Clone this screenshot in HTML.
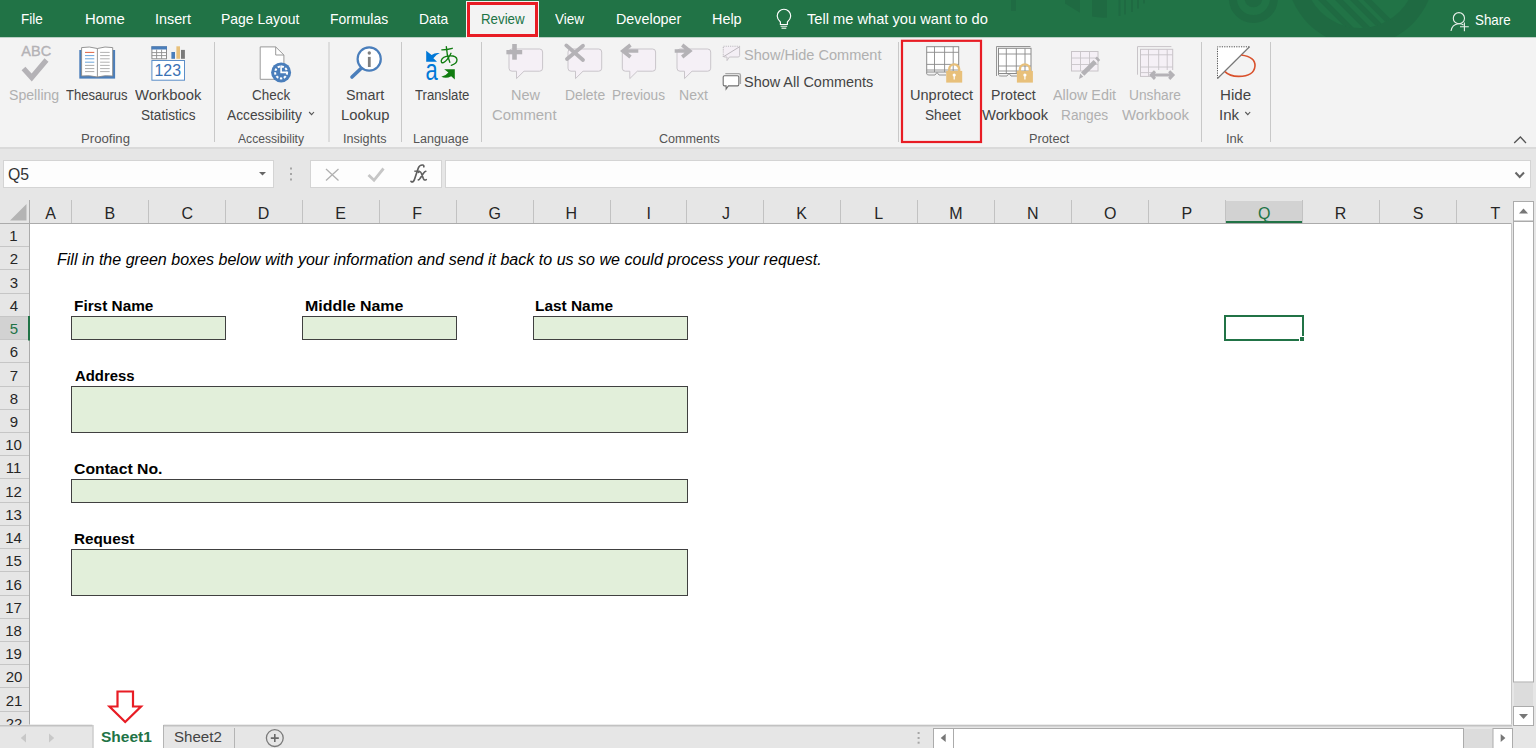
<!DOCTYPE html>
<html><head><meta charset="utf-8"><style>
html,body{margin:0;padding:0;width:1536px;height:748px;overflow:hidden;background:#e6e6e6;font-family:"Liberation Sans",sans-serif}
.t{position:absolute;white-space:pre;transform-origin:0 0}
svg{position:absolute;left:0;top:0}
</style></head><body>
<svg width="1536" height="748" viewBox="0 0 1536 748">
<rect x="0" y="0" width="1536" height="37.5" fill="#217346"/>
<g fill="#1f6a42" opacity="0.9">
<rect x="1011" y="0" width="5" height="11"/>
<path d="M1065 0 H1080 V12.7 L1065 3.5 Z"/>
<path d="M1092 0 H1107 V17.5 Q1100 18 1092 16.5 Z"/>
<rect x="1118.5" y="0" width="2" height="16"/>
<rect x="1124" y="0" width="2" height="14.4"/>
<rect x="1131" y="0" width="2" height="11.9"/>
<rect x="1137" y="0" width="2" height="8.5"/>
<rect x="1143" y="0" width="2" height="3.4"/>
</g>
<circle cx="1253.4" cy="-1.5" r="20.5" fill="none" stroke="#1f6a42" stroke-width="8"/>
<circle cx="1253.4" cy="-1.5" r="8.8" fill="#1f6a42"/>
<clipPath id="tb"><rect x="0" y="0" width="1536" height="37"/></clipPath>
<clipPath id="inner"><circle cx="1360" cy="-28" r="56"/></clipPath>
<g clip-path="url(#tb)"><circle cx="1360.5" cy="-28" r="73.5" fill="#1f6a42"/>
<circle cx="1360" cy="-28" r="56" fill="#217346"/>
<g clip-path="url(#inner)" stroke="#1f6a42" stroke-width="5.5">
<line x1="1302" y1="-20" x2="1362" y2="40"/>
<line x1="1319" y1="-20" x2="1379" y2="40"/>
<line x1="1334" y1="-20" x2="1394" y2="40"/>
<line x1="1347.5" y1="-20" x2="1407.5" y2="40"/>
</g></g>
<rect x="466" y="1" width="73" height="37" fill="#f3f3f3"/>
<rect x="0" y="37.5" width="1536" height="109.5" fill="#f3f3f3"/>
<rect x="466" y="36" width="73" height="3" fill="#f3f3f3"/>
<rect x="0" y="147" width="1536" height="2" fill="#dadada"/>
<rect x="468.5" y="3.5" width="68" height="32" fill="none" stroke="#e81c24" stroke-width="3"/>
<rect x="214.0" y="42" width="1" height="100" fill="#c8c8c8"/>
<rect x="328.5" y="42" width="1" height="100" fill="#c8c8c8"/>
<rect x="401.0" y="42" width="1" height="100" fill="#c8c8c8"/>
<rect x="481.0" y="42" width="1" height="100" fill="#c8c8c8"/>
<rect x="898.0" y="42" width="1" height="100" fill="#c8c8c8"/>
<rect x="1201.0" y="42" width="1" height="100" fill="#c8c8c8"/>
<rect x="1270.0" y="42" width="1" height="100" fill="#c8c8c8"/>
<rect x="902" y="40.8" width="79" height="101.2" fill="none" stroke="#e81c24" stroke-width="2.2"/>
<polyline points="309.1,112 311.6,114.6 314,112" fill="none" stroke="#555" stroke-width="1.1"/>
<polyline points="1245.3,112 1247.8,114.6 1250.2,112" fill="none" stroke="#555" stroke-width="1.1"/>
<polyline points="1514.2,143 1520.4,137 1526,143" fill="none" stroke="#555" stroke-width="1.3"/>
<rect x="3.5" y="160.5" width="270" height="27" fill="#fdfdfd" stroke="#d4d4d4"/>
<path d="M259 172 H266 L262.5 175.5 Z" fill="#666"/>
<rect x="290" y="167.5" width="2" height="2" fill="#a6a6a6"/>
<rect x="290" y="173" width="2" height="2" fill="#a6a6a6"/>
<rect x="290" y="178.5" width="2" height="2" fill="#a6a6a6"/>
<rect x="310.5" y="160.5" width="131" height="27" fill="#fdfdfd" stroke="#d4d4d4"/>
<path d="M326 169 L338.5 180.5 M338.5 169 L326 180.5" stroke="#b0b0b0" stroke-width="1.3"/>
<path d="M368.5 175 L374 180.3 L383.5 168.5" fill="none" stroke="#c6c6c6" stroke-width="2.8"/>
<path d="M411 181.3 Q412.8 183 414.2 180.2 L418.3 168 Q419.6 164.8 422.6 165 Q424.2 165.3 423.8 166.8" fill="none" stroke="#5f5f5f" stroke-width="1.7" stroke-linecap="round"/>
<path d="M414.3 171.2 H419.8" stroke="#5f5f5f" stroke-width="1.4"/>
<path d="M418.3 172.3 Q420.3 170.8 421.3 173.2 L423.4 178.6 Q424.4 180.8 426.3 179.6 M425.8 171.3 Q424.6 171.6 423.5 173.2 L420.2 178.2 Q419.2 180.2 418.3 179.8" fill="none" stroke="#5f5f5f" stroke-width="1.6" stroke-linecap="round"/>
<rect x="445.5" y="160.5" width="1085" height="27" fill="#fdfdfd" stroke="#d4d4d4"/>
<polyline points="1515.5,172.5 1519.7,177 1524,172.5" fill="none" stroke="#666" stroke-width="2"/>
<rect x="0" y="200" width="1512" height="24" fill="#e6e6e6"/>
<path d="M26.5 204 V220.5 H10 Z" fill="#b4b4b4"/>
<rect x="1225" y="201" width="77" height="22" fill="#d2d2d2"/>
<rect x="1225" y="221" width="77" height="2" fill="#217346"/>
<rect x="71" y="200" width="1" height="23" fill="#c2c2c2"/>
<rect x="148" y="200" width="1" height="23" fill="#c2c2c2"/>
<rect x="225" y="200" width="1" height="23" fill="#c2c2c2"/>
<rect x="302" y="200" width="1" height="23" fill="#c2c2c2"/>
<rect x="379" y="200" width="1" height="23" fill="#c2c2c2"/>
<rect x="456" y="200" width="1" height="23" fill="#c2c2c2"/>
<rect x="533" y="200" width="1" height="23" fill="#c2c2c2"/>
<rect x="610" y="200" width="1" height="23" fill="#c2c2c2"/>
<rect x="686" y="200" width="1" height="23" fill="#c2c2c2"/>
<rect x="763" y="200" width="1" height="23" fill="#c2c2c2"/>
<rect x="840" y="200" width="1" height="23" fill="#c2c2c2"/>
<rect x="917" y="200" width="1" height="23" fill="#c2c2c2"/>
<rect x="994" y="200" width="1" height="23" fill="#c2c2c2"/>
<rect x="1071" y="200" width="1" height="23" fill="#c2c2c2"/>
<rect x="1148" y="200" width="1" height="23" fill="#c2c2c2"/>
<rect x="1225" y="200" width="1" height="23" fill="#c2c2c2"/>
<rect x="1302" y="200" width="1" height="23" fill="#c2c2c2"/>
<rect x="1379" y="200" width="1" height="23" fill="#c2c2c2"/>
<rect x="1456" y="200" width="1" height="23" fill="#c2c2c2"/>
<rect x="0" y="223" width="1512" height="1" fill="#ababab"/>
<rect x="0" y="224" width="30" height="501" fill="#e6e6e6"/>
<rect x="0" y="316" width="29" height="24" fill="#d2d2d2"/>
<rect x="0" y="246" width="29" height="1" fill="#c6c6c6"/>
<rect x="0" y="269" width="29" height="1" fill="#c6c6c6"/>
<rect x="0" y="293" width="29" height="1" fill="#c6c6c6"/>
<rect x="0" y="316" width="29" height="1" fill="#c6c6c6"/>
<rect x="0" y="339" width="29" height="1" fill="#c6c6c6"/>
<rect x="0" y="362" width="29" height="1" fill="#c6c6c6"/>
<rect x="0" y="386" width="29" height="1" fill="#c6c6c6"/>
<rect x="0" y="409" width="29" height="1" fill="#c6c6c6"/>
<rect x="0" y="432" width="29" height="1" fill="#c6c6c6"/>
<rect x="0" y="455" width="29" height="1" fill="#c6c6c6"/>
<rect x="0" y="478" width="29" height="1" fill="#c6c6c6"/>
<rect x="0" y="502" width="29" height="1" fill="#c6c6c6"/>
<rect x="0" y="525" width="29" height="1" fill="#c6c6c6"/>
<rect x="0" y="548" width="29" height="1" fill="#c6c6c6"/>
<rect x="0" y="571" width="29" height="1" fill="#c6c6c6"/>
<rect x="0" y="595" width="29" height="1" fill="#c6c6c6"/>
<rect x="0" y="618" width="29" height="1" fill="#c6c6c6"/>
<rect x="0" y="641" width="29" height="1" fill="#c6c6c6"/>
<rect x="0" y="664" width="29" height="1" fill="#c6c6c6"/>
<rect x="0" y="687" width="29" height="1" fill="#c6c6c6"/>
<rect x="0" y="711" width="29" height="1" fill="#c6c6c6"/>
<rect x="29" y="200" width="1" height="525" fill="#ababab"/>
<rect x="28" y="316" width="2" height="24.5" fill="#217346"/>
<rect x="30" y="224" width="1481" height="500.5" fill="#ffffff"/>
<rect x="1511" y="223" width="1" height="502" fill="#c6c6c6"/>
<rect x="71.5" y="316.5" width="154" height="23" fill="#e2efda" stroke="#404040" stroke-width="1"/>
<rect x="302.5" y="316.5" width="154" height="23" fill="#e2efda" stroke="#404040" stroke-width="1"/>
<rect x="533.5" y="316.5" width="154" height="23" fill="#e2efda" stroke="#404040" stroke-width="1"/>
<rect x="71.5" y="386.5" width="616" height="46" fill="#e2efda" stroke="#404040" stroke-width="1"/>
<rect x="71.5" y="479.5" width="616" height="23" fill="#e2efda" stroke="#404040" stroke-width="1"/>
<rect x="71.5" y="549.5" width="616" height="46" fill="#e2efda" stroke="#404040" stroke-width="1"/>
<rect x="1225" y="316" width="78" height="24" fill="none" stroke="#217346" stroke-width="2"/>
<rect x="1299.5" y="336.5" width="5" height="5" fill="#217346" stroke="#fff" stroke-width="1"/>
<rect x="0" y="724.5" width="1536" height="23.5" fill="#e6e6e6"/>
<rect x="1512" y="200" width="24" height="548" fill="#e6e6e6"/>
<rect x="1513.5" y="201.5" width="20" height="19.5" fill="#fff" stroke="#ababab"/>
<path d="M1519 213.5 H1528 L1523.5 208.5 Z" fill="#777"/>
<rect x="1513.5" y="221.5" width="20" height="460.5" fill="#fff" stroke="#ababab"/>
<rect x="1514" y="683" width="19" height="23" fill="#dcdcdc"/>
<rect x="1513.5" y="706.5" width="20" height="19" fill="#fff" stroke="#ababab"/>
<path d="M1519 714 H1528 L1523.5 719 Z" fill="#777"/>
<rect x="0" y="725" width="1512" height="1.5" fill="#c2c2c2"/>
<rect x="92.5" y="724" width="71" height="24" fill="#ffffff"/>
<rect x="92.5" y="725" width="1" height="23" fill="#b4b4b4"/>
<rect x="163" y="725" width="1" height="23" fill="#b4b4b4"/>
<rect x="234" y="728" width="1" height="20" fill="#b4b4b4"/>
<path d="M26 733.4 V742.4 L20.8 737.9 Z" fill="#c8c8c8"/>
<path d="M49 733.4 V742.4 L54.2 737.9 Z" fill="#c8c8c8"/>
<circle cx="274.8" cy="738.1" r="8.4" fill="none" stroke="#7a7a7a" stroke-width="1.3"/>
<path d="M270.8 738.1 H278.8 M274.8 734.1 V742.1" stroke="#6a6a6a" stroke-width="1.6"/>
<rect x="917.6" y="732" width="2" height="2" fill="#a6a6a6"/>
<rect x="917.6" y="737" width="2" height="2" fill="#a6a6a6"/>
<rect x="917.6" y="741.7" width="2" height="2" fill="#a6a6a6"/>
<rect x="933.5" y="728.5" width="20" height="20" fill="#fff" stroke="#ababab"/>
<path d="M945.7 733.8 V742 L940.7 737.9 Z" fill="#777"/>
<rect x="953.5" y="728.5" width="510" height="20" fill="#fff" stroke="#ababab"/>
<rect x="1464" y="729" width="29" height="19" fill="#dcdcdc"/>
<rect x="1493" y="728.5" width="19.5" height="20" fill="#fff" stroke="#ababab"/>
<path d="M1500.7 734 V742 L1505.4 738 Z" fill="#777"/>
<path d="M117.5 691.5 H133 V706.5 H141 L125.2 722 L109.5 706.5 H117.5 Z" fill="none" stroke="#e81c24" stroke-width="2.2" stroke-linejoin="miter"/>
<text x="21.3" y="56" font-family="Liberation Sans" font-size="15.3" fill="#b4b2b6" stroke="#b4b2b6" stroke-width="0.35" textLength="29.8" lengthAdjust="spacingAndGlyphs">ABC</text>
<polyline points="23.5,68.5 31.7,77.5 46.5,60" fill="none" stroke="#b4b2b6" stroke-width="5.2"/>
<rect x="79.3" y="50" width="35.8" height="28.6" fill="#4a7ebb"/>
<path d="M81.6 47.6 Q89 46 97.4 48.5 Q105 46 112.7 47.6 V76 Q105 75 97.4 77 Q89 75 81.6 76 Z" fill="#fff" stroke="#8a8a8a" stroke-width="0.9"/>
<line x1="97.4" y1="48.5" x2="97.4" y2="77" stroke="#8a8a8a" stroke-width="0.9"/>
<line x1="85" y1="52.4" x2="94.3" y2="52.4" stroke="#d9512c" stroke-width="0.9"/>
<line x1="100.1" y1="52.4" x2="109.7" y2="52.4" stroke="#a8a8a8" stroke-width="0.9"/>
<line x1="85" y1="55.6" x2="94.3" y2="55.6" stroke="#5b9bd5" stroke-width="0.9"/>
<line x1="100.1" y1="55.6" x2="109.7" y2="55.6" stroke="#a8a8a8" stroke-width="0.9"/>
<line x1="85" y1="58.8" x2="94.3" y2="58.8" stroke="#5b9bd5" stroke-width="0.9"/>
<line x1="100.1" y1="58.8" x2="109.7" y2="58.8" stroke="#a8a8a8" stroke-width="0.9"/>
<line x1="85" y1="62.2" x2="94.3" y2="62.2" stroke="#5b9bd5" stroke-width="0.9"/>
<line x1="100.1" y1="62.2" x2="109.7" y2="62.2" stroke="#a8a8a8" stroke-width="0.9"/>
<line x1="85" y1="65.4" x2="94.3" y2="65.4" stroke="#a0a0a0" stroke-width="0.9"/>
<line x1="100.1" y1="65.4" x2="109.7" y2="65.4" stroke="#a8a8a8" stroke-width="0.9"/>
<line x1="85" y1="68.6" x2="94.3" y2="68.6" stroke="#a0a0a0" stroke-width="0.9"/>
<line x1="100.1" y1="68.6" x2="109.7" y2="68.6" stroke="#a8a8a8" stroke-width="0.9"/>
<line x1="85" y1="71.6" x2="94.3" y2="71.6" stroke="#a0a0a0" stroke-width="0.9"/>
<line x1="100.1" y1="71.6" x2="109.7" y2="71.6" stroke="#a8a8a8" stroke-width="0.9"/>
<rect x="151.9" y="46.8" width="14.6" height="12" fill="#fff" stroke="#8c8c8c" stroke-width="1"/>
<rect x="151.4" y="46.3" width="15.6" height="3.2" fill="#4a7ebb"/>
<line x1="156.6" y1="49.5" x2="156.6" y2="58.8" stroke="#8c8c8c" stroke-width="0.9"/>
<line x1="161.6" y1="49.5" x2="161.6" y2="58.8" stroke="#8c8c8c" stroke-width="0.9"/>
<line x1="151.9" y1="52.6" x2="166.5" y2="52.6" stroke="#8c8c8c" stroke-width="0.9"/>
<line x1="151.9" y1="55.6" x2="166.5" y2="55.6" stroke="#8c8c8c" stroke-width="0.9"/>
<rect x="171.4" y="52" width="3.6" height="6.8" fill="#4a7ebb"/>
<rect x="176.4" y="46.3" width="3.6" height="12.5" fill="#e8c07a"/>
<rect x="181" y="49.9" width="3.9" height="8.9" fill="#7a7a7a"/>
<rect x="151.9" y="60.5" width="32.6" height="19.7" fill="#fff" stroke="#5b8ec8" stroke-width="1"/>
<text x="154.5" y="76" font-family="Liberation Sans" font-size="16.5" fill="#3a72b5" textLength="26.5" lengthAdjust="spacingAndGlyphs">123</text>
<path d="M260.2 46.9 H275.7 L283.9 55 V79.3 H260.2 Z" fill="#fff" stroke="#9a9a9a" stroke-width="1"/>
<path d="M275.7 46.9 V55 H283.9" fill="none" stroke="#9a9a9a" stroke-width="1"/>
<circle cx="281.1" cy="72.4" r="10" fill="#4a7ebb"/>
<circle cx="281.1" cy="72.4" r="6" fill="none" stroke="#fff" stroke-width="2" stroke-dasharray="2.4 1.6"/>
<path d="M281.1 65.5 V72.4 H287" fill="none" stroke="#fff" stroke-width="1.6"/>
<circle cx="369.2" cy="59" r="11.6" fill="#fff" stroke="#4a7ebb" stroke-width="2.2"/>
<line x1="352" y1="77" x2="361" y2="68.5" stroke="#4a7ebb" stroke-width="3.6" stroke-linecap="round"/>
<circle cx="369.3" cy="53" r="1.7" fill="#7f7f7f"/>
<rect x="367.9" y="56.9" width="2.8" height="10.1" fill="#7f7f7f"/>
<path d="M426.2 50.7 L431.6 54.9 Q435.2 52.2 439.8 53.1 Q435.3 55.2 433.4 58.2 L437 61.7 H426.2 Z" fill="#0078d7"/>
<text x="425.4" y="79.7" font-family="Liberation Sans" font-size="29" fill="#0078d7" textLength="12.2" lengthAdjust="spacingAndGlyphs">a</text>
<g fill="none" stroke="#107c10" stroke-width="1.35" stroke-linecap="round"><path d="M441.8 49.8 Q447 49.8 452.3 48.3"/><path d="M446.3 46.6 Q446.6 55 449.8 62.3"/><path d="M451 53.3 Q447.5 60.5 443.5 62.6 Q441 63.3 441.3 60.5 Q442.5 56.3 449.5 55.8 Q456.6 55.6 457 59.8 Q457 63.6 451.3 65.4"/></g>
<path d="M454.8 69.3 V79.6 L451.2 76.2 Q446.2 79.2 441.3 76.8 Q446.3 75.2 448.4 72.4 L444.2 69.3 Z" fill="#107c10"/>
<path d="M512 49 H539.6 Q542.6 49 542.6 52 V68.2 Q542.6 71.2 539.6 71.2 H524 L516.5 78.6 V71.2 H512 Q509 71.2 509 68.2 V52 Q509 49 512 49 Z" fill="#f5f0f6" stroke="#c9c5ca" stroke-width="1"/>
<rect x="506.4" y="50" width="15.8" height="4.3" fill="#b4b2b6"/><rect x="512.2" y="44" width="4.6" height="15.7" fill="#b4b2b6"/>
<path d="M571 49 H598.7 Q601.7 49 601.7 52 V68.2 Q601.7 71.2 598.7 71.2 H583 L575.5 78.6 V71.2 H571 Q568 71.2 568 68.2 V52 Q568 49 571 49 Z" fill="#f5f0f6" stroke="#c9c5ca" stroke-width="1"/>
<path d="M566.3 45.4 L583 60 M567 59 L583 45.8" stroke="#b4b2b6" stroke-width="3.8" stroke-linecap="round"/>
<path d="M625.3 49 H652.6 Q655.6 49 655.6 52 V68.2 Q655.6 71.2 652.6 71.2 H637.3 L629.8 78.6 V71.2 H625.3 Q622.3 71.2 622.3 68.2 V52 Q622.3 49 625.3 49 Z" fill="#f5f0f6" stroke="#c9c5ca" stroke-width="1"/>
<path d="M630.5 45 L623 51 L630.5 57 M623.5 51 H638.3" fill="none" stroke="#b4b2b6" stroke-width="3.7" stroke-linejoin="miter"/>
<path d="M680 49 H707.7 Q710.7 49 710.7 52 V68.2 Q710.7 71.2 707.7 71.2 H692 L684.5 78.6 V71.2 H680 Q677 71.2 677 68.2 V52 Q677 49 680 49 Z" fill="#f5f0f6" stroke="#c9c5ca" stroke-width="1"/>
<path d="M682.2 45 L689.7 51 L682.2 57 M689.2 51 H674.7" fill="none" stroke="#b4b2b6" stroke-width="3.7" stroke-linejoin="miter"/>
<path d="M723.3 46.2 H739.6 V57 H729.4 L727 60.6 V57 H723.3 Z" fill="#f4eff5"/>
<path d="M723.3 57 V46.2 H739.6" fill="none" stroke="#bdb9be" stroke-width="1.1" stroke-dasharray="1.1 1.1"/>
<path d="M739.6 46.2 V55.5 Q739.6 57 738.1 57 H729.4 L727 60.6 V57 H724.8 Q723.3 57 723.3 55.5" fill="none" stroke="#c8c4c8" stroke-width="1"/>
<line x1="723.8" y1="56.5" x2="739.5" y2="46.8" stroke="#bdb9be" stroke-width="1"/>
<path d="M725.3 73.6 H738.8 Q740.4 73.6 740.4 75.2 V84" fill="none" stroke="#a8a8a8" stroke-width="1.4"/>
<path d="M724.5 75.7 H737.5 Q738.8 75.7 738.8 77 V84.6 Q738.8 85.9 737.5 85.9 H728.4 L726.1 89 V85.9 H724.5 Q723.2 85.9 723.2 84.6 V77 Q723.2 75.7 724.5 75.7 Z" fill="#fff" stroke="#707070" stroke-width="1.1"/>
<rect x="926.7" y="46.7" width="32.0" height="25.299999999999997" fill="#fff" stroke="#8a8a8a" stroke-width="1"/><line x1="934.5" y1="46.7" x2="934.5" y2="72" stroke="#8a8a8a" stroke-width="0.9"/><line x1="944.6" y1="46.7" x2="944.6" y2="72" stroke="#8a8a8a" stroke-width="0.9"/><line x1="953.2" y1="46.7" x2="953.2" y2="72" stroke="#8a8a8a" stroke-width="0.9"/><line x1="926.7" y1="52.3" x2="958.7" y2="52.3" stroke="#8a8a8a" stroke-width="0.9"/><line x1="926.7" y1="64.4" x2="958.7" y2="64.4" stroke="#8a8a8a" stroke-width="0.9"/><line x1="926.7" y1="70" x2="958.7" y2="70" stroke="#8a8a8a" stroke-width="0.9"/>
<path d="M926.7 72 V74 Q927 75 929 75 H935 L937 72.5 L939 75 H946" fill="none" stroke="#8a8a8a" stroke-width="0.9"/>
<path d="M949.2 71.5 V69.4 A5 5 0 0 1 959.2 69.4 V71.5" fill="none" stroke="#e8c07a" stroke-width="2.4"/><rect x="946.2" y="70.9" width="16" height="11.7" fill="#e8c07a"/><circle cx="954.2" cy="75" r="1.6" fill="#fff"/><rect x="953.6" y="75" width="1.2" height="4.5" fill="#fff"/>
<path d="M996.5 76 V46.5 H1030.5" fill="none" stroke="#8a8a8a" stroke-width="0.9"/>
<rect x="998.5" y="48.3" width="32.5" height="25.200000000000003" fill="#fff" stroke="#8a8a8a" stroke-width="1"/><line x1="1006.3" y1="48.3" x2="1006.3" y2="73.5" stroke="#8a8a8a" stroke-width="0.9"/><line x1="1016.3" y1="48.3" x2="1016.3" y2="73.5" stroke="#8a8a8a" stroke-width="0.9"/><line x1="1025" y1="48.3" x2="1025" y2="73.5" stroke="#8a8a8a" stroke-width="0.9"/><line x1="998.5" y1="54" x2="1031" y2="54" stroke="#8a8a8a" stroke-width="0.9"/><line x1="998.5" y1="66" x2="1031" y2="66" stroke="#8a8a8a" stroke-width="0.9"/><line x1="998.5" y1="71" x2="1031" y2="71" stroke="#8a8a8a" stroke-width="0.9"/>
<path d="M998.5 73.5 V75 Q999 76 1001 76 H1007 L1009 73.5 L1011 76 H1017" fill="none" stroke="#8a8a8a" stroke-width="0.9"/>
<path d="M1019.9 71.5 V69.4 A5 5 0 0 1 1029.9 69.4 V71.5" fill="none" stroke="#e8c07a" stroke-width="2.4"/><rect x="1016.9" y="70.9" width="16" height="11.7" fill="#e8c07a"/><circle cx="1024.9" cy="75" r="1.6" fill="#fff"/><rect x="1024.3" y="75" width="1.2" height="4.5" fill="#fff"/>
<rect x="1071.5" y="51.5" width="26.5" height="19.5" fill="#f5f0f6" stroke="#c8c4c8" stroke-width="1"/><line x1="1080.5" y1="51.5" x2="1080.5" y2="71" stroke="#c8c4c8" stroke-width="0.9"/><line x1="1089.5" y1="51.5" x2="1089.5" y2="71" stroke="#c8c4c8" stroke-width="0.9"/><line x1="1071.5" y1="58" x2="1098" y2="58" stroke="#c8c4c8" stroke-width="0.9"/><line x1="1071.5" y1="64.5" x2="1098" y2="64.5" stroke="#c8c4c8" stroke-width="0.9"/>
<rect x="1088" y="62" width="12" height="12" fill="#f3f3f3" transform="rotate(45 1094 68)" opacity="0"/>
<path d="M1081 72.5 L1093.6 59.9 L1096.9 63.2 L1084.3 75.8 Z" fill="#b4b2b6"/>
<path d="M1095.1 58.4 L1096.9 56.6 L1100.2 59.9 L1098.4 61.7 Z" fill="#b4b2b6"/>
<path d="M1080.2 73.6 L1083.3 76.7 L1079 79 Z" fill="#b4b2b6"/>
<path d="M1137.5 74.7 V46.6 H1171.4" fill="none" stroke="#c8c4c8" stroke-width="1"/>
<rect x="1140.5" y="49.3" width="32.200000000000045" height="27.10000000000001" fill="#f5f0f6" stroke="#c8c4c8" stroke-width="1"/><line x1="1148.5" y1="49.3" x2="1148.5" y2="76.4" stroke="#c8c4c8" stroke-width="0.9"/><line x1="1158.7" y1="49.3" x2="1158.7" y2="76.4" stroke="#c8c4c8" stroke-width="0.9"/><line x1="1167.2" y1="49.3" x2="1167.2" y2="76.4" stroke="#c8c4c8" stroke-width="0.9"/><line x1="1140.5" y1="54.8" x2="1172.7" y2="54.8" stroke="#c8c4c8" stroke-width="0.9"/><line x1="1140.5" y1="67" x2="1172.7" y2="67" stroke="#c8c4c8" stroke-width="0.9"/><line x1="1140.5" y1="72.6" x2="1172.7" y2="72.6" stroke="#c8c4c8" stroke-width="0.9"/>
<rect x="1152" y="70" width="22" height="10" fill="#f3f3f3"/>
<path d="M1155 71.3 L1151.2 75.1 L1155 78.9 M1169.2 71.3 L1173 75.1 L1169.2 78.9 M1152 75.1 H1172.2" fill="none" stroke="#b4b2b6" stroke-width="3"/>
<path d="M1217.5 78.5 V46.8 H1249.5 Z" fill="#fff"/>
<path d="M1217.5 78.5 V46.8 H1249.5" fill="none" stroke="#505050" stroke-width="1" stroke-dasharray="1.2 1.2"/>
<line x1="1217.5" y1="78.5" x2="1249.5" y2="46.8" stroke="#777" stroke-width="1.2"/>
<path d="M1241.3 55 Q1255.5 57 1255 66 Q1254 76.5 1238.5 76.4 Q1229.5 76.3 1225 71.6" fill="none" stroke="#d9512c" stroke-width="1.6"/>
<path d="M780.4 24.5 V22 Q777.2 19 777.2 16 A6.75 6.75 0 0 1 790.7 16 Q790.7 19 787.4 22 V24.5 Z" fill="none" stroke="#fff" stroke-width="1.15"/>
<line x1="780.6" y1="26.3" x2="787.2" y2="26.3" stroke="#d8e6dd" stroke-width="1.1"/><line x1="781.5" y1="28.2" x2="786.3" y2="28.2" stroke="#fff" stroke-width="1.1"/>
<circle cx="1458.9" cy="18.2" r="5.6" fill="none" stroke="#e8efe9" stroke-width="1.1"/>
<path d="M1451 31 Q1452 24.5 1458.5 23.8 Q1461.5 23.6 1463.5 25" fill="none" stroke="#e8efe9" stroke-width="1.1"/>
<path d="M1460 26.8 H1468.8 M1464.4 22.4 V31.2" stroke="#e8efe9" stroke-width="1.1"/>
</svg>
<div class="t" style="left:21.11px;top:10px;font-size:14.8px;line-height:18px;color:#ffffff;font-weight:normal;font-style:normal;transform:scaleX(0.9132);">File</div><div class="t" style="left:84.60px;top:10px;font-size:14.8px;line-height:18px;color:#ffffff;font-weight:normal;font-style:normal;transform:scaleX(1.0044);">Home</div><div class="t" style="left:154.83px;top:10px;font-size:14.8px;line-height:18px;color:#ffffff;font-weight:normal;font-style:normal;transform:scaleX(0.9698);">Insert</div><div class="t" style="left:221.06px;top:10px;font-size:14.8px;line-height:18px;color:#ffffff;font-weight:normal;font-style:normal;transform:scaleX(0.9417);">Page Layout</div><div class="t" style="left:329.85px;top:10px;font-size:14.8px;line-height:18px;color:#ffffff;font-weight:normal;font-style:normal;transform:scaleX(0.9426);">Formulas</div><div class="t" style="left:419.06px;top:10px;font-size:14.8px;line-height:18px;color:#ffffff;font-weight:normal;font-style:normal;transform:scaleX(0.9353);">Data</div><div class="t" style="left:555.00px;top:10px;font-size:14.8px;line-height:18px;color:#ffffff;font-weight:normal;font-style:normal;transform:scaleX(0.9154);">View</div><div class="t" style="left:615.63px;top:10px;font-size:14.8px;line-height:18px;color:#ffffff;font-weight:normal;font-style:normal;transform:scaleX(0.9682);">Developer</div><div class="t" style="left:712.22px;top:10px;font-size:14.8px;line-height:18px;color:#ffffff;font-weight:normal;font-style:normal;transform:scaleX(0.9729);">Help</div><div class="t" style="left:807.40px;top:10px;font-size:14.8px;line-height:18px;color:#ffffff;font-weight:normal;font-style:normal;transform:scaleX(0.9904);">Tell me what you want to do</div><div class="t" style="left:480.70px;top:10px;font-size:14.8px;line-height:18px;color:#217346;font-weight:normal;font-style:normal;transform:scaleX(0.8993);">Review</div><div class="t" style="left:1474.76px;top:11px;font-size:14.8px;line-height:18px;color:#ffffff;font-weight:normal;font-style:normal;transform:scaleX(0.9031);">Share</div><div class="t" style="left:8.60px;top:87px;font-size:14px;line-height:17px;color:#b0b0b0;font-weight:normal;font-style:normal;transform:scaleX(1.0080);">Spelling</div><div class="t" style="left:66.39px;top:87px;font-size:14px;line-height:17px;color:#444444;font-weight:normal;font-style:normal;transform:scaleX(0.9314);">Thesaurus</div><div class="t" style="left:134.60px;top:87px;font-size:14px;line-height:17px;color:#444444;font-weight:normal;font-style:normal;transform:scaleX(1.0571);">Workbook</div><div class="t" style="left:140.60px;top:107px;font-size:14px;line-height:17px;color:#444444;font-weight:normal;font-style:normal;transform:scaleX(0.9718);">Statistics</div><div class="t" style="left:80.97px;top:132px;font-size:12px;line-height:14px;color:#555555;font-weight:normal;font-style:normal;transform:scaleX(1.0957);">Proofing</div><div class="t" style="left:251.75px;top:87px;font-size:14px;line-height:17px;color:#444444;font-weight:normal;font-style:normal;transform:scaleX(0.9614);">Check</div><div class="t" style="left:227.20px;top:107px;font-size:14px;line-height:17px;color:#444444;font-weight:normal;font-style:normal;transform:scaleX(0.9812);">Accessibility</div><div class="t" style="left:237.59px;top:132px;font-size:12px;line-height:14px;color:#555555;font-weight:normal;font-style:normal;transform:scaleX(1.0101);">Accessibility</div><div class="t" style="left:346.17px;top:87px;font-size:14px;line-height:17px;color:#444444;font-weight:normal;font-style:normal;transform:scaleX(1.0213);">Smart</div><div class="t" style="left:341.14px;top:107px;font-size:14px;line-height:17px;color:#444444;font-weight:normal;font-style:normal;transform:scaleX(1.0547);">Lookup</div><div class="t" style="left:342.95px;top:132px;font-size:12px;line-height:14px;color:#555555;font-weight:normal;font-style:normal;transform:scaleX(1.0507);">Insights</div><div class="t" style="left:415.00px;top:87px;font-size:14px;line-height:17px;color:#444444;font-weight:normal;font-style:normal;transform:scaleX(0.9407);">Translate</div><div class="t" style="left:412.96px;top:132px;font-size:12px;line-height:14px;color:#555555;font-weight:normal;font-style:normal;transform:scaleX(1.0439);">Language</div><div class="t" style="left:510.97px;top:87px;font-size:14px;line-height:17px;color:#b0b0b0;font-weight:normal;font-style:normal;transform:scaleX(1.0339);">New</div><div class="t" style="left:492.37px;top:107px;font-size:14px;line-height:17px;color:#b0b0b0;font-weight:normal;font-style:normal;transform:scaleX(1.0631);">Comment</div><div class="t" style="left:564.81px;top:87px;font-size:14px;line-height:17px;color:#b0b0b0;font-weight:normal;font-style:normal;transform:scaleX(0.9929);">Delete</div><div class="t" style="left:612.03px;top:87px;font-size:14px;line-height:17px;color:#b0b0b0;font-weight:normal;font-style:normal;transform:scaleX(0.9725);">Previous</div><div class="t" style="left:679.00px;top:87px;font-size:14px;line-height:17px;color:#b0b0b0;font-weight:normal;font-style:normal;transform:scaleX(1.0037);">Next</div><div class="t" style="left:743.59px;top:47px;font-size:14px;line-height:17px;color:#b0b0b0;font-weight:normal;font-style:normal;transform:scaleX(1.0394);">Show/Hide Comment</div><div class="t" style="left:743.58px;top:74px;font-size:14px;line-height:17px;color:#444444;font-weight:normal;font-style:normal;transform:scaleX(1.0317);">Show All Comments</div><div class="t" style="left:659.20px;top:132px;font-size:12px;line-height:14px;color:#555555;font-weight:normal;font-style:normal;transform:scaleX(1.0481);">Comments</div><div class="t" style="left:910.35px;top:87px;font-size:14px;line-height:17px;color:#444444;font-weight:normal;font-style:normal;transform:scaleX(1.0401);">Unprotect</div><div class="t" style="left:924.97px;top:107px;font-size:14px;line-height:17px;color:#444444;font-weight:normal;font-style:normal;transform:scaleX(0.9765);">Sheet</div><div class="t" style="left:990.59px;top:87px;font-size:14px;line-height:17px;color:#444444;font-weight:normal;font-style:normal;transform:scaleX(1.0080);">Protect</div><div class="t" style="left:981.99px;top:107px;font-size:14px;line-height:17px;color:#444444;font-weight:normal;font-style:normal;transform:scaleX(1.0513);">Workbook</div><div class="t" style="left:1053.00px;top:87px;font-size:14px;line-height:17px;color:#b0b0b0;font-weight:normal;font-style:normal;transform:scaleX(1.0264);">Allow Edit</div><div class="t" style="left:1060.83px;top:107px;font-size:14px;line-height:17px;color:#b0b0b0;font-weight:normal;font-style:normal;transform:scaleX(0.9779);">Ranges</div><div class="t" style="left:1129.02px;top:87px;font-size:14px;line-height:17px;color:#b0b0b0;font-weight:normal;font-style:normal;transform:scaleX(0.9823);">Unshare</div><div class="t" style="left:1122.00px;top:107px;font-size:14px;line-height:17px;color:#b0b0b0;font-weight:normal;font-style:normal;transform:scaleX(1.0667);">Workbook</div><div class="t" style="left:1028.95px;top:132px;font-size:12px;line-height:14px;color:#555555;font-weight:normal;font-style:normal;transform:scaleX(1.0627);">Protect</div><div class="t" style="left:1219.92px;top:87px;font-size:14px;line-height:17px;color:#444444;font-weight:normal;font-style:normal;transform:scaleX(1.0788);">Hide</div><div class="t" style="left:1218.92px;top:107px;font-size:14px;line-height:17px;color:#444444;font-weight:normal;font-style:normal;transform:scaleX(1.0750);">Ink</div><div class="t" style="left:1225.68px;top:132px;font-size:12px;line-height:14px;color:#555555;font-weight:normal;font-style:normal;transform:scaleX(1.0808);">Ink</div><div class="t" style="left:8.34px;top:165px;font-size:16px;line-height:19px;color:#333333;font-weight:normal;font-style:normal;transform:scaleX(0.9869);">Q5</div><div class="t" style="left:56.80px;top:250px;font-size:16px;line-height:19px;color:#000000;font-weight:normal;font-style:italic;transform:scaleX(1.0032);">Fill in the green boxes below with your information and send it back to us so we could process your request.</div><div class="t" style="left:73.78px;top:297px;font-size:15px;line-height:18px;color:#000000;font-weight:bold;font-style:normal;transform:scaleX(1.0238);">First Name</div><div class="t" style="left:304.94px;top:297px;font-size:15px;line-height:18px;color:#000000;font-weight:bold;font-style:normal;transform:scaleX(1.0639);">Middle Name</div><div class="t" style="left:535.37px;top:297px;font-size:15px;line-height:18px;color:#000000;font-weight:bold;font-style:normal;transform:scaleX(1.0279);">Last Name</div><div class="t" style="left:74.80px;top:367px;font-size:15px;line-height:18px;color:#000000;font-weight:bold;font-style:normal;transform:scaleX(0.9921);">Address</div><div class="t" style="left:73.77px;top:460px;font-size:15px;line-height:18px;color:#000000;font-weight:bold;font-style:normal;transform:scaleX(1.0504);">Contact No.</div><div class="t" style="left:73.78px;top:530px;font-size:15px;line-height:18px;color:#000000;font-weight:bold;font-style:normal;transform:scaleX(1.0175);">Request</div><div class="t" style="left:100.98px;top:729px;font-size:14px;line-height:17px;color:#217346;font-weight:bold;font-style:normal;transform:scaleX(1.1062);">Sheet1</div><div class="t" style="left:173.78px;top:729px;font-size:14px;line-height:17px;color:#444444;font-weight:normal;font-style:normal;transform:scaleX(1.0778);">Sheet2</div><div class="t" style="left:45.25px;top:205px;font-size:16px;line-height:18px;color:#262626">A</div><div class="t" style="left:104.47px;top:205px;font-size:16px;line-height:18px;color:#262626">B</div><div class="t" style="left:181.40px;top:205px;font-size:16px;line-height:18px;color:#262626">C</div><div class="t" style="left:257.83px;top:205px;font-size:16px;line-height:18px;color:#262626">D</div><div class="t" style="left:335.25px;top:205px;font-size:16px;line-height:18px;color:#262626">E</div><div class="t" style="left:412.19px;top:205px;font-size:16px;line-height:18px;color:#262626">F</div><div class="t" style="left:488.62px;top:205px;font-size:16px;line-height:18px;color:#262626">G</div><div class="t" style="left:565.55px;top:205px;font-size:16px;line-height:18px;color:#262626">H</div><div class="t" style="left:646.48px;top:205px;font-size:16px;line-height:18px;color:#262626">I</div><div class="t" style="left:721.91px;top:205px;font-size:16px;line-height:18px;color:#262626">J</div><div class="t" style="left:796.34px;top:205px;font-size:16px;line-height:18px;color:#262626">K</div><div class="t" style="left:874.27px;top:205px;font-size:16px;line-height:18px;color:#262626">L</div><div class="t" style="left:949.20px;top:205px;font-size:16px;line-height:18px;color:#262626">M</div><div class="t" style="left:1027.12px;top:205px;font-size:16px;line-height:18px;color:#262626">N</div><div class="t" style="left:1104.06px;top:205px;font-size:16px;line-height:18px;color:#262626">O</div><div class="t" style="left:1181.49px;top:205px;font-size:16px;line-height:18px;color:#262626">P</div><div class="t" style="left:1257.91px;top:205px;font-size:16px;line-height:18px;color:#217346">Q</div><div class="t" style="left:1334.85px;top:205px;font-size:16px;line-height:18px;color:#262626">R</div><div class="t" style="left:1412.78px;top:205px;font-size:16px;line-height:18px;color:#262626">S</div><div class="t" style="left:1490.50px;top:205px;font-size:16px;line-height:18px;color:#262626">T</div><div style="position:absolute;left:0;top:224px;width:29px;height:501px;overflow:hidden"><div class="t" style="left:9.30px;top:3px;font-size:15px;line-height:18px;color:#262626">1</div><div class="t" style="left:9.80px;top:26px;font-size:15px;line-height:18px;color:#262626">2</div><div class="t" style="left:9.80px;top:50px;font-size:15px;line-height:18px;color:#262626">3</div><div class="t" style="left:9.80px;top:73px;font-size:15px;line-height:18px;color:#262626">4</div><div class="t" style="left:9.80px;top:96px;font-size:15px;line-height:18px;color:#217346">5</div><div class="t" style="left:9.80px;top:119px;font-size:15px;line-height:18px;color:#262626">6</div><div class="t" style="left:9.80px;top:143px;font-size:15px;line-height:18px;color:#262626">7</div><div class="t" style="left:9.80px;top:166px;font-size:15px;line-height:18px;color:#262626">8</div><div class="t" style="left:9.80px;top:189px;font-size:15px;line-height:18px;color:#262626">9</div><div class="t" style="left:5.13px;top:212px;font-size:15px;line-height:18px;color:#262626">10</div><div class="t" style="left:5.69px;top:235px;font-size:15px;line-height:18px;color:#262626">11</div><div class="t" style="left:5.13px;top:259px;font-size:15px;line-height:18px;color:#262626">12</div><div class="t" style="left:5.13px;top:282px;font-size:15px;line-height:18px;color:#262626">13</div><div class="t" style="left:5.13px;top:305px;font-size:15px;line-height:18px;color:#262626">14</div><div class="t" style="left:5.13px;top:328px;font-size:15px;line-height:18px;color:#262626">15</div><div class="t" style="left:5.13px;top:352px;font-size:15px;line-height:18px;color:#262626">16</div><div class="t" style="left:5.13px;top:375px;font-size:15px;line-height:18px;color:#262626">17</div><div class="t" style="left:5.13px;top:398px;font-size:15px;line-height:18px;color:#262626">18</div><div class="t" style="left:5.13px;top:421px;font-size:15px;line-height:18px;color:#262626">19</div><div class="t" style="left:5.63px;top:444px;font-size:15px;line-height:18px;color:#262626">20</div><div class="t" style="left:5.63px;top:468px;font-size:15px;line-height:18px;color:#262626">21</div><div class="t" style="left:5.63px;top:491px;font-size:15px;line-height:18px;color:#262626">22</div></div>
</body></html>
